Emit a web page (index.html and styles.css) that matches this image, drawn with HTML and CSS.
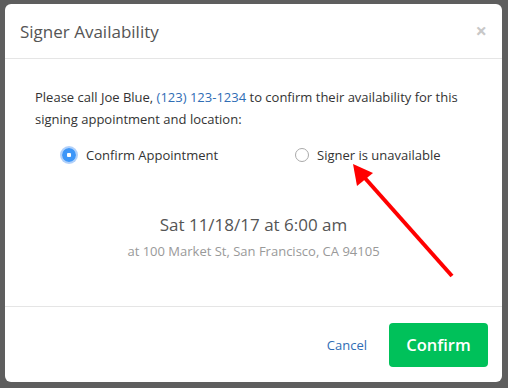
FILE: index.html
```html
<!DOCTYPE html>
<html>
<head>
<meta charset="utf-8">
<link rel="stylesheet" href="styles.css">
</head>
<body>
<div class="backdrop">
  <div class="modal">
    <div class="modal-header">
      <h2 class="title">Signer Availability</h2>
      <span class="close">&times;</span>
    </div>
    <div class="modal-body">
      <p class="intro">Please call Joe Blue, <span class="link">(123) 123-1234</span> to confirm their availability for this signing appointment and location:</p>
      <div class="choices">
        <label class="choice choice-a"><span class="radio checked"></span>Confirm Appointment</label>
        <label class="choice choice-b"><span class="radio"></span>Signer is unavailable</label>
      </div>
      <div class="when">Sat 11/18/17 at 6:00 am</div>
      <div class="where">at 100 Market St, San Francisco, CA 94105</div>
    </div>
    <div class="modal-footer">
      <a class="cancel">Cancel</a>
      <button class="confirm">Confirm</button>
    </div>
  </div>
  <svg class="arrow" width="508" height="388" viewBox="0 0 508 388">
    <line x1="452" y1="276" x2="364" y2="177" stroke="#ff0000" stroke-width="4"/>
    <polygon points="353,164 373,173 357,186" fill="#ff0000"/>
  </svg>
</div>
</body>
</html>
```

FILE: styles.css
```css
* { box-sizing: border-box; }
html, body { margin: 0; padding: 0; }
body {
  width: 508px;
  height: 388px;
  overflow: hidden;
  font-family: "Open Sans", "Liberation Sans", sans-serif;
  background: #5e5e5e;
}
.backdrop {
  position: relative;
  width: 508px;
  height: 388px;
  padding: 4px 6px 0 5px;
}
.modal {
  width: 497px;
  height: 378px;
  background: #fff;
  border-radius: 6px;
  display: flex;
  flex-direction: column;
}
.modal-header {
  height: 55px;
  border-bottom: 1px solid #e5e5e5;
  display: flex;
  align-items: center;
  justify-content: space-between;
  padding: 0 15px 0 15px;
}
.title {
  margin: 0;
  font-size: 17px;
  font-weight: 400;
  color: #555;
}
.close {
  font-size: 20px;
  color: #c8c8c8;
  font-weight: 700;
  line-height: 1;
}
.modal-body {
  flex: 1;
  padding: 27px 30px 0 30px;
}
.intro {
  margin: 0;
  font-size: 13px;
  line-height: 22px;
  color: #333;
}
.link { color: #2f6db5; }
.choices {
  display: flex;
  margin-top: 14px;
  height: 22px;
  align-items: center;
  font-size: 13px;
  color: #333;
}
.choice {
  display: flex;
  align-items: center;
}
.choice-a { margin-left: 27px; width: 233px; }
.choice-a .radio { margin-right: 10px; }
.radio {
  width: 14px;
  height: 14px;
  border-radius: 50%;
  border: 1px solid #aaa;
  margin-right: 8px;
  background: #fff;
}
.radio.checked {
  border: none;
  background: radial-gradient(circle, #fff 0 2px, #3d96f8 2.5px);
  box-shadow: 0 0 0 2px rgba(80, 150, 245, 0.45);
}
.when {
  margin-top: 47px;
  text-align: center;
  font-size: 17px;
  color: #555;
}
.where {
  margin-top: 6px;
  text-align: center;
  font-size: 13px;
  color: #999;
}
.modal-footer {
  height: 76px;
  border-top: 1px solid #e5e5e5;
  display: flex;
  align-items: center;
  justify-content: flex-end;
  padding: 0 14px 0 0;
}
.cancel {
  font-size: 13px;
  color: #2f6db5;
  margin-right: 22px;
}
.confirm {
  width: 99px;
  height: 44px;
  border: none;
  border-radius: 4px;
  background: #00c15a;
  color: #fff;
  font-family: "Open Sans", "Liberation Sans", sans-serif;
  font-size: 16.5px;
  font-weight: 600;
}
.arrow {
  position: absolute;
  left: 0;
  top: 0;
}
```
